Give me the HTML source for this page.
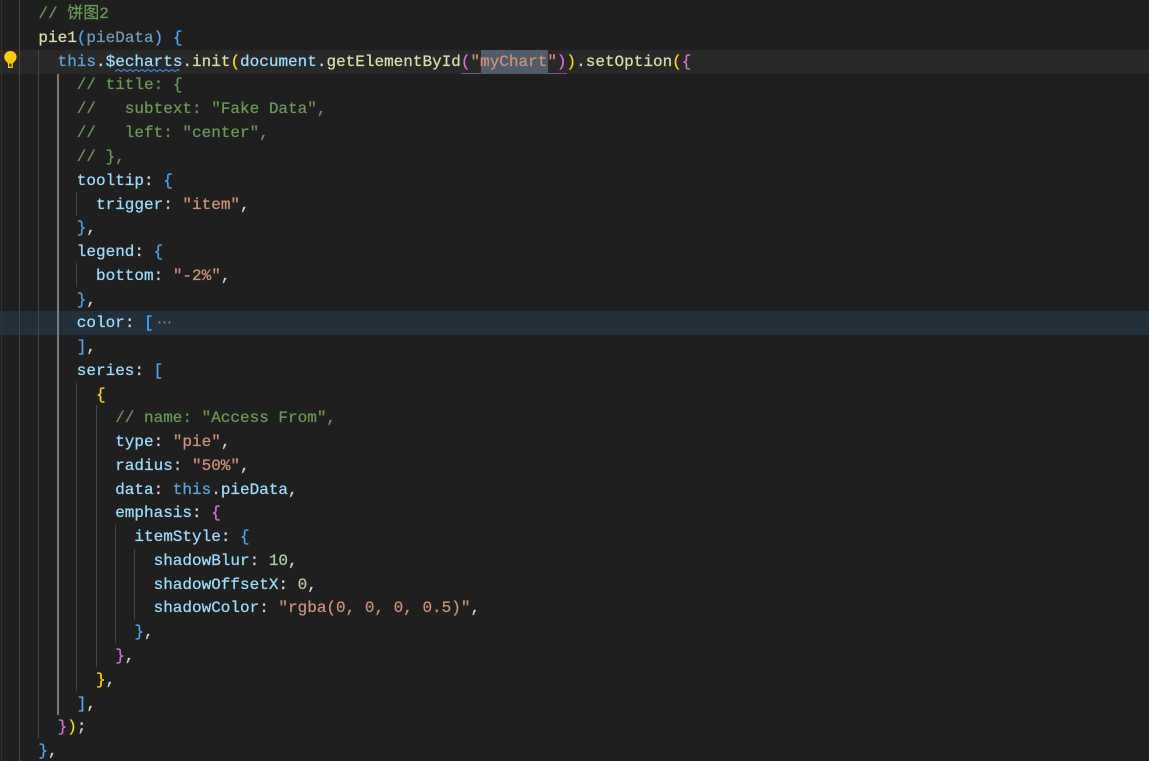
<!DOCTYPE html>
<html><head><meta charset="utf-8">
<style>
html,body{margin:0;padding:0;background:#1f1f1f;}
#e{position:relative;width:1149px;height:761px;overflow:hidden;background:#1f1f1f;font-family:"Liberation Mono","Noto Sans CJK SC",monospace;font-size:16px;color:#d4d4d4;}
.l{position:absolute;white-space:pre;height:24px;line-height:24px;margin-top:1px;-webkit-text-stroke:0.25px currentColor;}
.g{position:absolute;width:1px;background:#454545;}
.a{background:#7a7a7a;width:1.500px;}
.c{color:#6a9955}.v{color:#9cdcfe}.s{color:#ce9178}.n{color:#b5cea8}.k{color:#5ca3dc}.f{color:#dcdcaa}.p{color:#7299b8}
.y{color:#ffd700}.m{color:#da70d6}.b{color:#4aa8f5}.w{color:#d4d4d4}
</style></head><body><div id="e">
<div style="position:absolute;left:0;top:50px;width:1149px;height:24px;background:#282828"></div>
<div style="position:absolute;left:0;top:311px;width:1149px;height:24px;background:#22303c"></div>
<div style="position:absolute;left:481px;top:50px;width:67px;height:24px;background:#515c6a"></div>
<div style="position:absolute;left:461px;top:73px;width:20px;height:1px;background:#8a4a8f"></div>
<div style="position:absolute;left:548px;top:73px;width:19px;height:1px;background:#8a4a8f"></div>
<div class="g" style="left:1px;top:0;height:761px;background:#333"></div>
<div class="g" style="left:19px;top:0;height:761px"></div>
<div class="g" style="left:38px;top:50px;height:688px"></div>
<div class="g a" style="left:57px;top:74px;height:641px"></div>
<div class="g" style="left:76px;top:192px;height:24px"></div>
<div class="g" style="left:76px;top:263px;height:24px"></div>
<div class="g" style="left:76px;top:383px;height:308px"></div>
<div class="g" style="left:96px;top:405px;height:262px"></div>
<div class="g" style="left:115px;top:525px;height:118px"></div>
<div class="g" style="left:134px;top:549px;height:71px"></div>
<svg style="position:absolute;left:115px;top:68px" width="68" height="5" viewBox="0 0 68 5"><path d="M0 3.500l3-2 3 2 3-2 3 2 3-2 3 2 3-2 3 2 3-2 3 2 3-2 3 2 3-2 3 2 3-2 3 2 3-2 3 2 3-2 3 2 3-2 1.500 1" fill="none" stroke="#3794ff" stroke-width="1"/></svg>
<svg style="position:absolute;left:0;top:44px" width="20" height="28" viewBox="0 0 20 28"><path d="M10.200 7a6 6 0 0 0-6 6c0 2 1 3.500 2 4.500.9.900 1.600 1.500 1.800 2.500v4h4.800v-4c.2-1 .9-1.600 1.800-2.500 1-1 2-2.500 2-4.500a6 6 0 0 0-6.400-6z" fill="#ffcc00"/><rect x="9.200" y="19.500" width="2.400" height="3.200" fill="#4a3a00"/></svg>
<svg style="position:absolute;left:157px;top:320px" width="16" height="5" viewBox="0 0 16 5"><circle cx="2.500" cy="2.500" r="1" fill="#8a9299"/><circle cx="7.500" cy="2.500" r="1" fill="#8a9299"/><circle cx="12.500" cy="2.500" r="1" fill="#8a9299"/></svg>
<div class="l" style="left:38.400px;top:1px"><span class="c">// 饼图2</span></div>
<div class="l" style="left:38.400px;top:25px"><span class="f">pie1</span><span class="b">(</span><span class="p">pieData</span><span class="b">)</span> <span class="b">{</span></div>
<div class="l" style="left:57.600px;top:49px"><span class="k">this</span>.<span class="v">$echarts</span>.<span class="f">init</span><span class="y">(</span><span class="v">document</span>.<span class="f">getElementById</span><span class="m">(</span><span class="s">"myChart"</span><span class="m">)</span><span class="y">)</span>.<span class="f">setOption</span><span class="y">(</span><span class="m">{</span></div>
<div class="l" style="left:76.800px;top:72px"><span class="c">// title: {</span></div>
<div class="l" style="left:76.800px;top:96px"><span class="c">//   subtext: "Fake Data",</span></div>
<div class="l" style="left:76.800px;top:120px"><span class="c">//   left: "center",</span></div>
<div class="l" style="left:76.800px;top:144px"><span class="c">// },</span></div>
<div class="l" style="left:76.800px;top:168px"><span class="v">tooltip</span>: <span class="b">{</span></div>
<div class="l" style="left:96px;top:192px"><span class="v">trigger</span>: <span class="s">"item"</span>,</div>
<div class="l" style="left:76.800px;top:215px"><span class="b">}</span>,</div>
<div class="l" style="left:76.800px;top:239px"><span class="v">legend</span>: <span class="b">{</span></div>
<div class="l" style="left:96px;top:263px"><span class="v">bottom</span>: <span class="s">"-2%"</span>,</div>
<div class="l" style="left:76.800px;top:287px"><span class="b">}</span>,</div>
<div class="l" style="left:76.800px;top:310px"><span class="v">color</span>: <span class="b">[</span></div>
<div class="l" style="left:76.800px;top:334px"><span class="b">]</span>,</div>
<div class="l" style="left:76.800px;top:358px"><span class="v">series</span>: <span class="b">[</span></div>
<div class="l" style="left:96px;top:382px"><span class="y">{</span></div>
<div class="l" style="left:115.200px;top:405px"><span class="c">// name: "Access From",</span></div>
<div class="l" style="left:115.200px;top:429px"><span class="v">type</span>: <span class="s">"pie"</span>,</div>
<div class="l" style="left:115.200px;top:453px"><span class="v">radius</span>: <span class="s">"50%"</span>,</div>
<div class="l" style="left:115.200px;top:477px"><span class="v">data</span>: <span class="k">this</span>.<span class="v">pieData</span>,</div>
<div class="l" style="left:115.200px;top:500px"><span class="v">emphasis</span>: <span class="m">{</span></div>
<div class="l" style="left:134.400px;top:524px"><span class="v">itemStyle</span>: <span class="b">{</span></div>
<div class="l" style="left:153.600px;top:548px"><span class="v">shadowBlur</span>: <span class="n">10</span>,</div>
<div class="l" style="left:153.600px;top:572px"><span class="v">shadowOffsetX</span>: <span class="n">0</span>,</div>
<div class="l" style="left:153.600px;top:595px"><span class="v">shadowColor</span>: <span class="s">"rgba(0, 0, 0, 0.5)"</span>,</div>
<div class="l" style="left:134.400px;top:619px"><span class="b">}</span>,</div>
<div class="l" style="left:115.200px;top:643px"><span class="m">}</span>,</div>
<div class="l" style="left:96px;top:667px"><span class="y">}</span>,</div>
<div class="l" style="left:76.800px;top:691px"><span class="b">]</span>,</div>
<div class="l" style="left:57.600px;top:714px"><span class="m">}</span><span class="y">)</span>;</div>
<div class="l" style="left:38.400px;top:738px"><span class="b">}</span>,</div>
</div></body></html>
